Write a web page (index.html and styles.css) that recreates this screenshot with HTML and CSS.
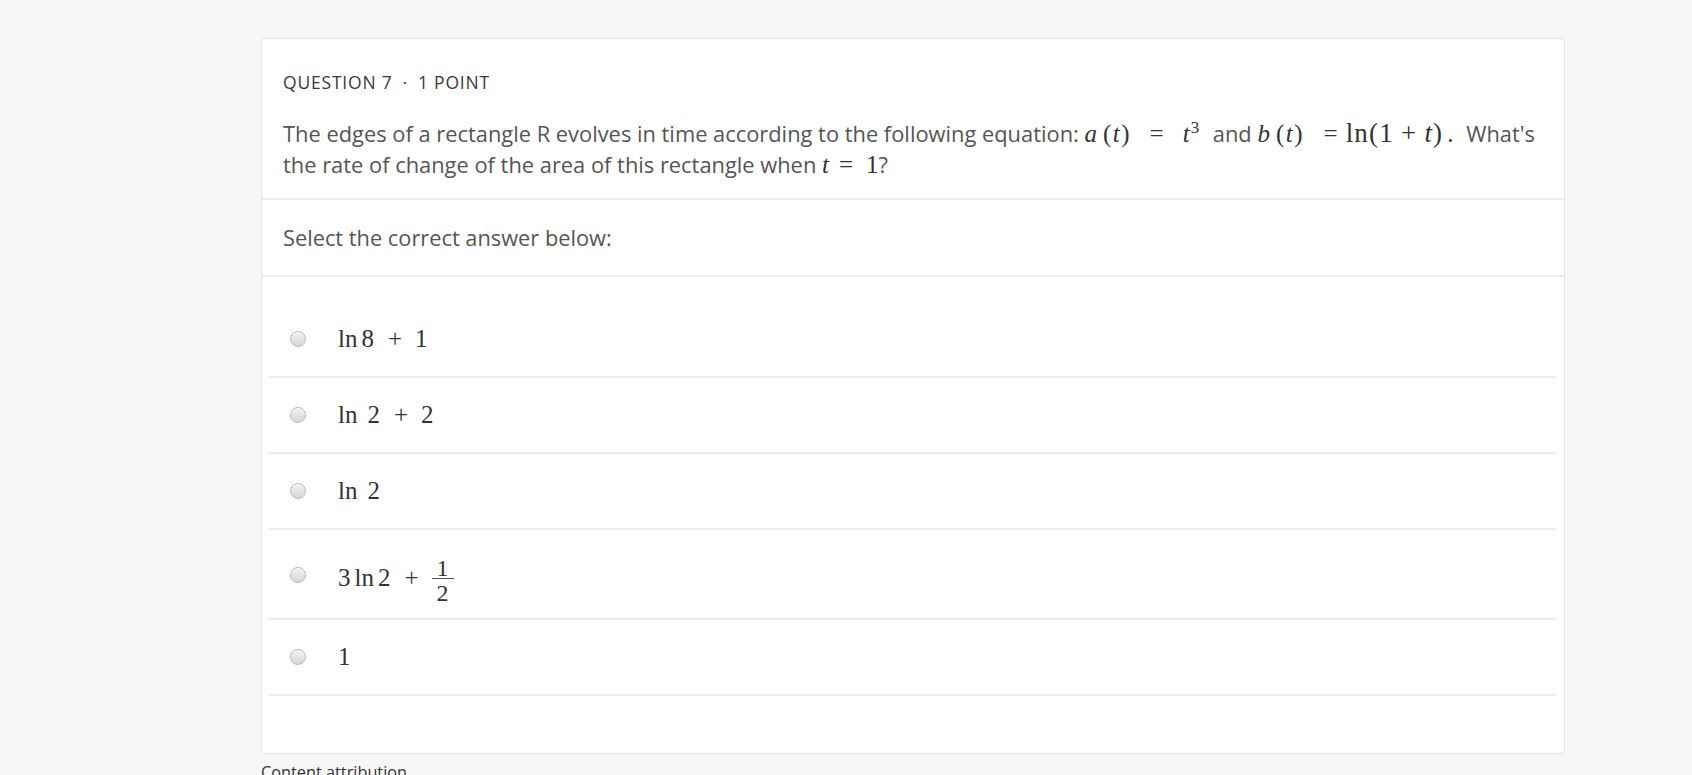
FILE: index.html
```html
<!DOCTYPE html>
<html lang="en">
<head>
<meta charset="utf-8">
<title>Question 7</title>
<link rel="stylesheet" href="styles.css">
</head>
<body>
<main class="page">
  <section class="card">
    <header class="q-head">
      <div class="q-label">QUESTION 7<span class="dot">·</span>1 POINT</div>
      <p class="q-text">The edges of a rectangle R evolves in time according to the following equation: <span class="m m-a"><span class="mi">a</span><span class="paren">(<span class="mi pt">t</span>)</span><span class="eq eq-wide">=</span><span class="mi">t</span><sup class="sup">3</sup></span> and <span class="m m-b"><span class="mi">b</span><span class="paren">(<span class="mi pt">t</span>)</span><span class="eq eq-left">=</span><span class="ln-grp">ln(1<span class="plus">+</span><span class="mi">t</span>)</span><span class="period">.</span></span> What's the rate of change of the area of this rectangle when <span class="m m-c"><span class="mi">t</span><span class="eq eq-c">=</span>1</span>?</p>
    </header>
    <div class="prompt">Select the correct answer below:</div>
    <ul class="options">
      <li class="option"><input type="radio" class="radio" name="q7"><span class="m ans">ln<span class="th"></span>8<span class="bin">+</span>1</span></li>
      <li class="option"><input type="radio" class="radio" name="q7"><span class="m ans">ln<span class="sp"></span>2<span class="bin">+</span>2</span></li>
      <li class="option"><input type="radio" class="radio" name="q7"><span class="m ans">ln<span class="sp"></span>2</span></li>
      <li class="option option-frac"><input type="radio" class="radio" name="q7"><span class="m ans">3<span class="th"></span>ln<span class="th"></span>2<span class="bin">+</span><span class="frac"><span class="num">1</span><span class="den">2</span></span></span></li>
      <li class="option"><input type="radio" class="radio" name="q7"><span class="m ans">1</span></li>
    </ul>
  </section>
  <div class="attrib">Content attribution</div>
</main>
</body>
</html>
```

FILE: styles.css
```css
html, body {
  margin: 0;
  padding: 0;
}
body {
  background: #f7f7f7;
  font-family: "Open Sans", "Liberation Sans", sans-serif;
  color: #555;
  height: 775px;
  overflow: hidden;
}
.page {
  padding: 38px 0 0 261px;
}
.card {
  width: 1302px;
  background: #fff;
  border: 1px solid #e4e4e4;
  border-radius: 3px;
}
.q-head {
  padding: 30px 16px 17px 21px;
  border-bottom: 2px solid #ececec;
}
.q-label {
  font-size: 17.5px;
  line-height: 26px;
  color: #3a3a3a;
  letter-spacing: 0.8px;
}
.dot {
  margin: 0 10px 0 10px;
}
.q-text {
  margin: 23px 0 0;
  font-size: 21.875px;
  line-height: 31.25px;
  color: #555;
}
.m {
  font-family: "Liberation Serif", "DejaVu Serif", serif;
  font-size: 25px;
  color: #333;
  white-space: nowrap;
}
.q-text .m {
  line-height: 20px;
}
.mi {
  font-style: italic;
}
.m-a {
  margin-left: 0;
  margin-right: 8px;
}
.m-b {
  margin-left: 0;
  margin-right: 7px;
}
.paren {
  margin-left: 6px;
}
.pt {
  margin: 0 1.5px;
}
.eq {
  margin: 0 6px;
}
.eq-wide {
  margin: 0 19px 0 20px;
}
.eq-left {
  margin: 0 8px 0 21px;
}
.eq-c {
  margin: 0 13px 0 10px;
}
.ln-grp {
  font-size: 27px;
  letter-spacing: 1.2px;
}
.plus {
  margin: 0 7px;
}
.period {
  margin-left: 4px;
}
.sup {
  font-size: 17px;
  line-height: 0;
  vertical-align: 9px;
  margin-left: 1px;
}
.prompt {
  padding: 22px 21px 22px;
  font-size: 21.8px;
  line-height: 31.25px;
  color: #555;
  border-bottom: 2px solid #ececec;
}
.options {
  list-style: none;
  margin: 0;
  padding: 25px 8px 57px 7px;
}
.option {
  box-sizing: border-box;
  display: flex;
  align-items: center;
  min-height: 76px;
  padding: 22px 0 22px 21px;
  border-bottom: 2px solid #ececec;
}
.option-frac {
  padding: 25px 0 16px 21px;
}
.option-frac .radio {
  margin-top: -6px;
}
.radio {
  appearance: none;
  -webkit-appearance: none;
  margin: 0 32px 0 0;
  width: 16px;
  height: 16px;
  border-radius: 50%;
  border: 1px solid #b9b9b9;
  background: linear-gradient(#f3f3f3, #d6d6d6);
  box-shadow: inset 0 1px 1px rgba(255,255,255,0.8);
  flex: none;
}
.ans {
  line-height: 26px;
  display: inline-flex;
  align-items: center;
}
.th {
  display: inline-block;
  width: 4px;
}
.sp {
  display: inline-block;
  width: 10px;
}
.bin {
  margin: 0 13px 0 14px;
}
.frac {
  display: inline-flex;
  flex-direction: column;
  align-items: center;
  font-size: 24px;
  line-height: 18px;
}
.num {
  padding: 4px 5px 1px;
  border-bottom: 1px solid #555;
}
.den {
  padding-top: 5px;
}
.attrib {
  margin-top: 7px;
  font-size: 16.3px;
  color: #333;
}
```
